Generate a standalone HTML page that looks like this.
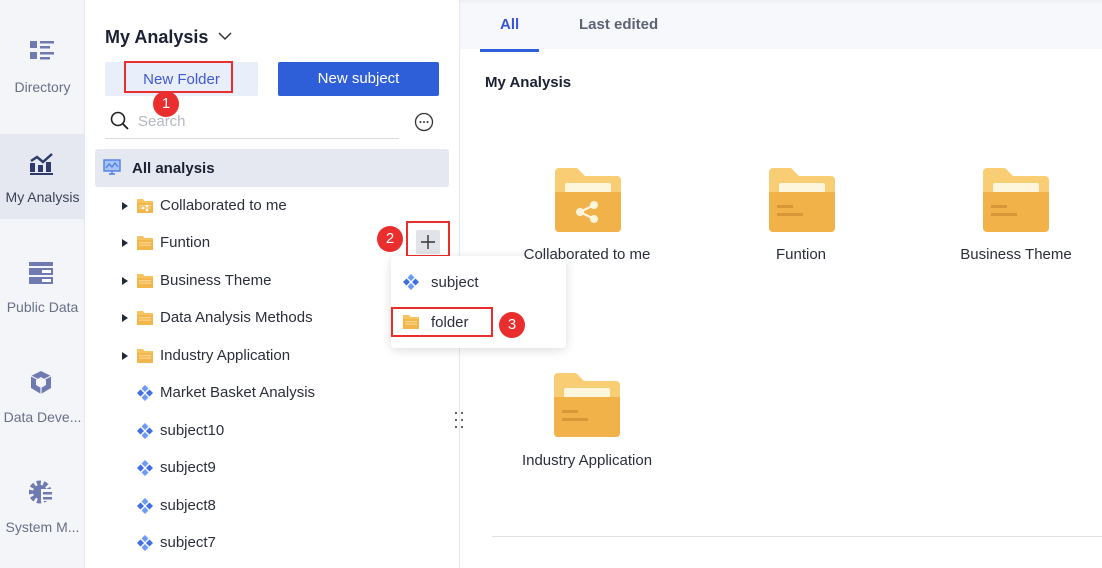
<!DOCTYPE html>
<html><head><meta charset="utf-8"><style>
*{margin:0;padding:0;box-sizing:border-box}
body{width:1102px;height:568px;overflow:hidden;background:#fff;font-family:"Liberation Sans",Arial,sans-serif;position:relative;color:#333}
.a{position:absolute}
.side{left:0;top:0;width:85px;height:568px;background:#f3f5f9;border-right:1px solid #e6e8ee}
.nav{position:absolute;left:0;width:85px;height:85px;text-align:center;font-size:14px;color:#6a6f86}
.nav .lb{position:absolute;left:-10px;width:105px;top:52px;white-space:nowrap;overflow:hidden}
.nav svg{position:absolute;left:29px;top:15px}
.mid{left:85px;top:0;width:375px;height:568px;border-right:1px solid #e6e8ee}
.row{position:absolute;left:122px;font-size:15px;color:#2b2f3a;height:20px;line-height:20px}
.tri{position:absolute;left:0;top:6px;width:0;height:0;border-left:6px solid #222a3a;border-top:4.5px solid transparent;border-bottom:4.5px solid transparent}
.ic{position:absolute;left:15px;top:2px}
.tx{position:absolute;left:38px;white-space:nowrap}
.badge{position:absolute;width:26px;height:26px;border-radius:50%;background:#ea2e2e;color:#fff;font-size:15px;text-align:center;line-height:26px}
.rbox{position:absolute;border:2px solid #ea2e2e}
.big{position:absolute;width:70px;height:70px}
.cap{position:absolute;font-size:15px;color:#2b2f3a;text-align:center;width:200px;white-space:nowrap}
</style></head><body>
<svg width="0" height="0" style="position:absolute"><defs>
<g id="subj"><path d="M8 0l3.5 3.5-3.5 3.5-3.5-3.5z" fill="#6d9cf4"/><path d="M12.5 4.5l3.5 3.5-3.5 3.5-3.5-3.5z" fill="#3f6fe3"/><path d="M8 9l3.5 3.5-3.5 3.5-3.5-3.5z" fill="#6d9cf4"/><path d="M3.5 4.5l3.5 3.5-3.5 3.5-3.5-3.5z" fill="#3f6fe3"/></g>
<g id="fold"><path d="M0 1h6l1.5 2H16v12H0z" fill="#f6c360"/><path d="M0 5h16v10H0z" fill="#f3b64a"/><path d="M2 7h12v1.2H2zM2 9.5h12v1.2H2z" fill="#f9d48a"/></g>
<g id="bigf"><path d="M2 2a4 4 0 0 1 4-4h18l8 8h32a4 4 0 0 1 4 4v48a4 4 0 0 1-4 4H6a4 4 0 0 1-4-4z" fill="#f9cd74" transform="translate(0,2)"/><rect x="12" y="15" width="46" height="14" rx="2" fill="#fdf5dc"/><path d="M2 24h66v36a4 4 0 0 1-4 4H6a4 4 0 0 1-4-4z" fill="#f2b24a"/></g>
</defs></svg>

<div class="a side">
 <div class="nav" style="top:23px"><svg width="28" height="28" viewBox="0 0 28 28"><rect x="1" y="3" width="7" height="7" fill="#6f7ab0"/><rect x="1" y="14" width="7" height="7" fill="#6f7ab0"/><rect x="11" y="3" width="14" height="2.5" fill="#6f7ab0"/><rect x="11" y="8" width="10" height="2.5" fill="#6f7ab0"/><rect x="11" y="14" width="14" height="2.5" fill="#6f7ab0"/><rect x="11" y="19" width="10" height="2.5" fill="#6f7ab0"/></svg><div class="lb" style="top:56px">Directory</div></div>
 <div class="nav" style="top:134px;background:#e5e8f0;color:#3b4358"><svg width="28" height="28" viewBox="0 0 28 28"><path d="M2 12l6-4 6 5 9-8" stroke="#2e3a6a" stroke-width="2.5" fill="none"/><rect x="1" y="14" width="5" height="9" fill="#2e3a6a"/><rect x="9" y="16" width="5" height="7" fill="#2e3a6a"/><rect x="17" y="13" width="5" height="10" fill="#2e3a6a"/><rect x="1" y="24" width="23" height="2" fill="#2e3a6a"/></svg><div class="lb" style="top:55px">My Analysis</div></div>
 <div class="nav" style="top:244px"><svg width="28" height="28" viewBox="0 0 28 28"><rect x="0" y="3" width="24" height="4" fill="#6f7ab0"/><rect x="0" y="9" width="24" height="7" fill="#6f7ab0"/><rect x="0" y="18" width="24" height="7" fill="#6f7ab0"/><rect x="13" y="11" width="9" height="3" fill="#fff"/><rect x="13" y="20" width="9" height="3" fill="#fff"/></svg><div class="lb" style="top:55px">Public Data</div></div>
 <div class="nav" style="top:354px"><svg width="28" height="28" viewBox="0 0 28 28"><path d="M12 2l10 5v12l-10 6-10-6V7z" fill="#6f7ab0"/><path d="M12 8l5 3v5l-5 3-5-3v-5z" fill="#f3f5f9"/><path d="M12 11v14M2 7l10 5 10-5" stroke="#f3f5f9" stroke-width="1.2" fill="none"/></svg><div class="lb" style="top:55px">Data Deve...</div></div>
 <div class="nav" style="top:464px"><svg width="28" height="28" viewBox="0 0 28 28"><circle cx="11" cy="13" r="9" fill="none" stroke="#6f7ab0" stroke-width="5" stroke-dasharray="4 2.5"/><circle cx="11" cy="13" r="7" fill="#6f7ab0"/><rect x="12" y="10" width="12" height="12" fill="#f3f5f9"/><rect x="14" y="13" width="9" height="2.5" fill="#6f7ab0"/><rect x="14" y="18" width="9" height="2.5" fill="#6f7ab0"/></svg><div class="lb" style="top:55px">System M...</div></div>
</div>

<div class="a mid"></div>
<div class="a" style="left:105px;top:27px;font-size:18px;font-weight:bold;color:#1b2133">My Analysis</div>
<svg class="a" style="left:218px;top:31px" width="14" height="10"><path d="M1 2l6 6 6-6" stroke="#333" stroke-width="1.5" fill="none"/></svg>
<div class="a" style="left:105px;top:62px;width:153px;height:34px;background:#e8eefa;border-radius:2px"></div>
<div class="a" style="left:105px;top:71px;width:153px;text-align:center;font-size:15px;color:#4158d0">New Folder</div>
<div class="rbox" style="left:124px;top:61px;width:109px;height:32px"></div>
<div class="badge" style="left:153px;top:91px">1</div>
<div class="a" style="left:278px;top:62px;width:161px;height:34px;background:#2e5fd8;border-radius:2px;color:#fff;font-size:15px;text-align:center;line-height:34px">New subject</div>
<svg class="a" style="left:110px;top:111px" width="20" height="20"><circle cx="8" cy="8" r="6.5" stroke="#222" stroke-width="1.6" fill="none"/><path d="M13 13l5 5" stroke="#222" stroke-width="1.8"/></svg>
<div class="a" style="left:138px;top:113px;font-size:15px;color:#b4b8c2">Search</div>
<div class="a" style="left:105px;top:138px;width:294px;height:1px;background:#d9dce2"></div>
<svg class="a" style="left:414px;top:112px" width="20" height="20"><circle cx="10" cy="10" r="8.5" stroke="#333" stroke-width="1.3" fill="none"/><circle cx="6.5" cy="10" r="1" fill="#333"/><circle cx="10" cy="10" r="1" fill="#333"/><circle cx="13.5" cy="10" r="1" fill="#333"/></svg>

<div class="a" style="left:95px;top:149px;width:354px;height:38px;background:#e5e8f0;border-radius:3px"></div>
<svg class="a" style="left:103px;top:159px" width="18" height="17"><rect x="1" y="1" width="16" height="11" fill="#a9c3f7" stroke="#4d7eea" stroke-width="1.4"/><path d="M3 9l3-4 3 3 3-4 3 4" stroke="#4d7eea" stroke-width="1.3" fill="none"/><path d="M6 15h6M9 12v3" stroke="#4d7eea" stroke-width="1.4"/></svg>
<div class="a" style="left:132px;top:160px;font-size:15px;font-weight:bold;color:#1b2133">All analysis</div>

<div class="row" style="top:196px"><div class="tri"></div><svg class="ic" width="16" height="16"><use href="#fold"/><circle cx="6" cy="10" r="1.3" fill="#fff"/><circle cx="10" cy="8" r="1.3" fill="#fff"/><circle cx="10" cy="12" r="1.3" fill="#fff"/></svg><span class="tx">Collaborated to me</span></div>
<div class="row" style="top:233px"><div class="tri"></div><svg class="ic" width="16" height="16"><use href="#fold"/></svg><span class="tx">Funtion</span></div>
<div class="row" style="top:271px"><div class="tri"></div><svg class="ic" width="16" height="16"><use href="#fold"/></svg><span class="tx">Business Theme</span></div>
<div class="row" style="top:308px"><div class="tri"></div><svg class="ic" width="16" height="16"><use href="#fold"/></svg><span class="tx">Data Analysis Methods</span></div>
<div class="row" style="top:346px"><div class="tri"></div><svg class="ic" width="16" height="16"><use href="#fold"/></svg><span class="tx">Industry Application</span></div>
<div class="row" style="top:383px"><svg class="ic" width="16" height="16"><use href="#subj"/></svg><span class="tx">Market Basket Analysis</span></div>
<div class="row" style="top:421px"><svg class="ic" width="16" height="16"><use href="#subj"/></svg><span class="tx">subject10</span></div>
<div class="row" style="top:458px"><svg class="ic" width="16" height="16"><use href="#subj"/></svg><span class="tx">subject9</span></div>
<div class="row" style="top:496px"><svg class="ic" width="16" height="16"><use href="#subj"/></svg><span class="tx">subject8</span></div>
<div class="row" style="top:533px"><svg class="ic" width="16" height="16"><use href="#subj"/></svg><span class="tx">subject7</span></div>

<div class="a" style="left:416px;top:230px;width:24px;height:24px;background:#e1e3e8;border-radius:2px"></div>
<svg class="a" style="left:420px;top:234px" width="16" height="16"><path d="M8 1v14M1 8h14" stroke="#333" stroke-width="1.4"/></svg>
<div class="rbox" style="left:406px;top:221px;width:44px;height:36px"></div>
<div class="badge" style="left:377px;top:226px">2</div>

<div class="a" style="left:391px;top:256px;width:175px;height:92px;background:#fff;border-radius:4px;box-shadow:0 2px 10px rgba(0,0,0,.14)"></div>
<svg class="a" style="left:403px;top:274px" width="16" height="16"><use href="#subj"/></svg>
<div class="a" style="left:431px;top:274px;font-size:15px;color:#2b2f3a">subject</div>
<svg class="a" style="left:403px;top:314px" width="16" height="16"><use href="#fold"/></svg>
<div class="a" style="left:431px;top:314px;font-size:15px;color:#2b2f3a">folder</div>
<div class="rbox" style="left:391px;top:307px;width:102px;height:30px"></div>
<div class="badge" style="left:499px;top:312px">3</div>

<svg class="a" style="left:454px;top:410px" width="10" height="20"><circle cx="2" cy="3" r="1.1" fill="#555"/><circle cx="8" cy="3" r="1.1" fill="#555"/><circle cx="2" cy="10" r="1.1" fill="#555"/><circle cx="8" cy="10" r="1.1" fill="#555"/><circle cx="2" cy="17" r="1.1" fill="#555"/><circle cx="8" cy="17" r="1.1" fill="#555"/></svg>

<div class="a" style="left:460px;top:0;width:642px;height:49px;background:#f7f8fb;box-shadow:inset 0 4px 4px -3px rgba(0,0,0,.06)"></div>
<div class="a" style="left:500px;top:16px;font-size:15px;font-weight:bold;color:#3a55d8">All</div>
<div class="a" style="left:480px;top:49px;width:59px;height:3px;background:#2e5fd8"></div>
<div class="a" style="left:579px;top:16px;font-size:15px;font-weight:bold;color:#5d6375">Last edited</div>
<div class="a" style="left:485px;top:74px;font-size:15px;font-weight:bold;color:#1b2133">My Analysis</div>

<svg class="big" style="left:553px;top:168px" viewBox="0 0 70 70"><use href="#bigf"/><circle cx="27" cy="44" r="4" fill="#fdf5dc"/><circle cx="41" cy="37" r="4" fill="#fdf5dc"/><circle cx="41" cy="51" r="4" fill="#fdf5dc"/><path d="M27 44l14-7M27 44l14 7" stroke="#fdf5dc" stroke-width="2.2"/></svg>
<div class="cap" style="left:487px;top:246px">Collaborated to me</div>
<svg class="big" style="left:767px;top:168px" viewBox="0 0 70 70"><use href="#bigf"/><rect x="10" y="37" width="16" height="3" fill="#d9973a"/><rect x="10" y="45" width="26" height="3" fill="#d9973a"/></svg>
<div class="cap" style="left:701px;top:246px">Funtion</div>
<svg class="big" style="left:981px;top:168px" viewBox="0 0 70 70"><use href="#bigf"/><rect x="10" y="37" width="16" height="3" fill="#d9973a"/><rect x="10" y="45" width="26" height="3" fill="#d9973a"/></svg>
<div class="cap" style="left:916px;top:246px">Business Theme</div>
<svg class="big" style="left:552px;top:373px" viewBox="0 0 70 70"><use href="#bigf"/><rect x="10" y="37" width="16" height="3" fill="#d9973a"/><rect x="10" y="45" width="26" height="3" fill="#d9973a"/></svg>
<div class="cap" style="left:487px;top:452px">Industry Application</div>
<div class="a" style="left:492px;top:536px;width:610px;height:1px;background:#e0e2e6"></div>
</body></html>
